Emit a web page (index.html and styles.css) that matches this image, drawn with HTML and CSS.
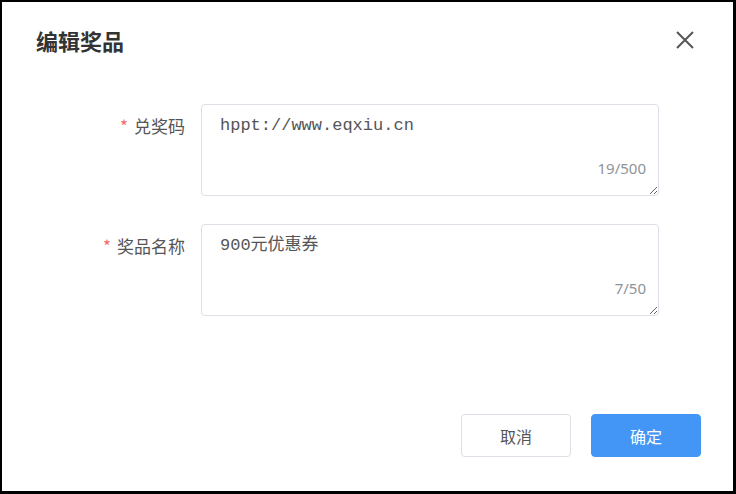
FILE: index.html
```html
<!DOCTYPE html>
<html lang="zh-CN">
<head>
    <meta charset="UTF-8">
    <meta name="viewport" content="width=device-width, initial-scale=1.0">
    <title>编辑奖品</title>
    <link rel="stylesheet" href="styles.css">
</head>
<body>
    <div class="dialog">
        <div class="dialog-header">
            <h2 class="dialog-title">编辑奖品</h2>
            <button class="close-button" aria-label="关闭">
                <svg width="20" height="20" viewBox="0 0 20 20">
                    <path d="M2 2 L18 18 M18 2 L2 18" stroke="#555" stroke-width="2" fill="none"/>
                </svg>
            </button>
        </div>

        <div class="dialog-body">
            <div class="form-row">
                <label class="form-label"><span class="required">*</span>兑奖码</label>
                <div class="field">
                    <textarea class="field-input">hppt://www.eqxiu.cn</textarea>
                    <span class="field-count">19/500</span>
                </div>
            </div>
            <div class="form-row">
                <label class="form-label"><span class="required">*</span>奖品名称</label>
                <div class="field">
                    <textarea class="field-input">900元优惠券</textarea>
                    <span class="field-count">7/50</span>
                </div>
            </div>
        </div>

        <div class="dialog-footer">
            <button class="btn btn-default">取消</button>
            <button class="btn btn-primary">确定</button>
        </div>
    </div>
</body>
</html>
```

FILE: styles.css
```css
/* Global Styles */
body {
    margin: 0;
    padding: 0;
    background: #fff;
    font-family: "Noto Sans CJK SC", "Noto Sans", sans-serif;
}

.dialog {
    width: 736px;
    height: 494px;
    box-sizing: border-box;
    border: 2px solid #000;
    border-right-width: 3px;
    border-bottom-width: 3px;
    background: #fff;
    display: flex;
    flex-direction: column;
}

.dialog-header {
    display: flex;
    justify-content: space-between;
    align-items: center;
    padding: 23px 38px 0 34px;
    height: 30px;
}

.dialog-title {
    margin: 0;
    font-size: 22px;
    font-weight: bold;
    color: #333;
    line-height: 30px;
}

.close-button {
    border: none;
    background: none;
    padding: 0;
    width: 20px;
    height: 20px;
    cursor: pointer;
}

.dialog-body {
    margin-top: 49px;
    display: flex;
    flex-direction: column;
    gap: 28px;
}

.form-row {
    display: grid;
    grid-template-columns: 183px 458px;
    column-gap: 16px;
}

.form-label {
    text-align: right;
    font-size: 17px;
    line-height: 22px;
    padding-top: 11px;
    color: #555;
}

.required {
    color: #f56c6c;
    margin-right: 6px;
}

.field {
    position: relative;
}

.field-input {
    display: block;
    width: 100%;
    height: 92px;
    box-sizing: border-box;
    border: 1px solid #dcdfe6;
    border-radius: 4px;
    padding: 10px 18px;
    font-family: "Liberation Mono", "Noto Sans CJK SC", monospace;
    font-size: 17px;
    line-height: 22px;
    color: #555;
    resize: vertical;
    outline: none;
}

.field-count {
    position: absolute;
    right: 13px;
    bottom: 18px;
    font-family: "Noto Sans", sans-serif;
    font-size: 15px;
    color: #909399;
}

.dialog-footer {
    margin-top: auto;
    display: flex;
    justify-content: flex-end;
    gap: 20px;
    padding: 0 32px 34px 0;
}

.btn {
    width: 110px;
    height: 43px;
    border-radius: 4px;
    font-family: "Noto Sans CJK SC", sans-serif;
    font-size: 16px;
    cursor: pointer;
}

.btn-default {
    background: #fff;
    color: #555;
    border: 1px solid #dcdfe6;
}

.btn-primary {
    background: #4496f6;
    color: #fff;
    border: 1px solid #4496f6;
}
```
